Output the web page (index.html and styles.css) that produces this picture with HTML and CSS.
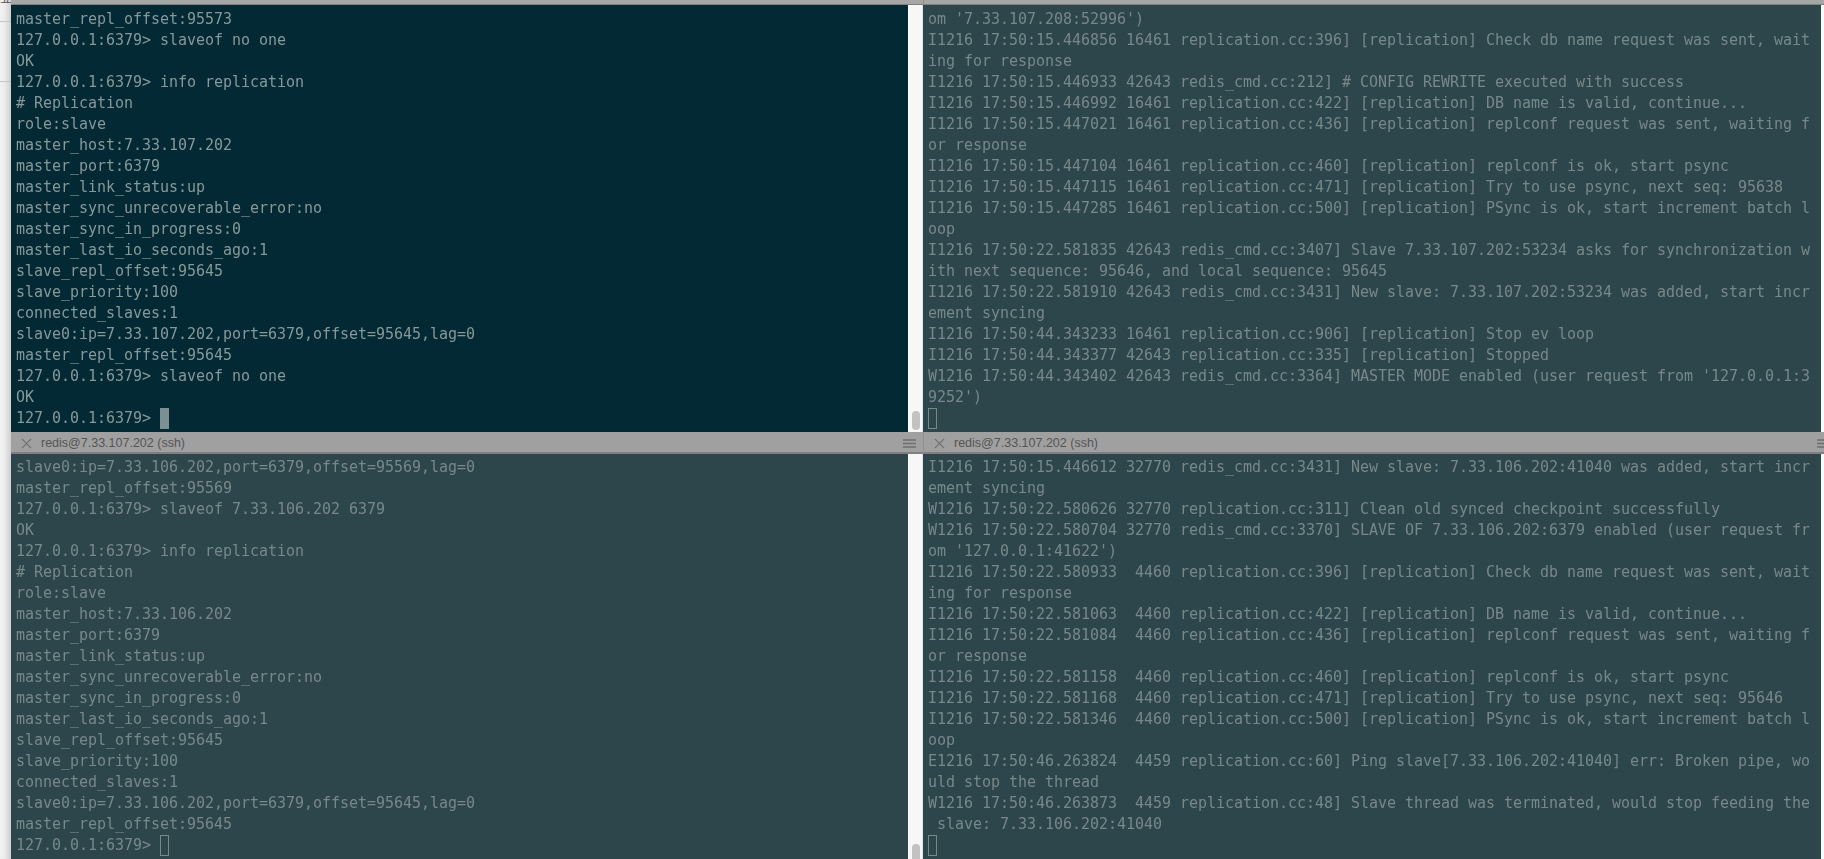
FILE: index.html
```html
<!DOCTYPE html>
<html lang="en">
<head>
<meta charset="utf-8">
<title>redis@7.33.107.202 (ssh)</title>
<link rel="stylesheet" href="styles.css">
</head>
<body>
<div class="window">
  <aside class="gutter">
    <span class="gutter-text">业F</span>
    <div class="gutter-rule gutter-rule-a"></div>
    <div class="gutter-rule gutter-rule-b"></div>
  </aside>
  <section class="col col-left">
    <div class="strip"></div>
    <div class="pane pane-top">
<pre class="term term-active">master_repl_offset:95573
127.0.0.1:6379&gt; slaveof no one
OK
127.0.0.1:6379&gt; info replication
# Replication
role:slave
master_host:7.33.107.202
master_port:6379
master_link_status:up
master_sync_unrecoverable_error:no
master_sync_in_progress:0
master_last_io_seconds_ago:1
slave_repl_offset:95645
slave_priority:100
connected_slaves:1
slave0:ip=7.33.107.202,port=6379,offset=95645,lag=0
master_repl_offset:95645
127.0.0.1:6379&gt; slaveof no one
OK
127.0.0.1:6379&gt; <span class="cursor cursor-solid"></span></pre>
      <div class="scroll"><div class="thumb thumb-top"></div></div>
    </div>
    <header class="titlebar">
      <svg class="close" viewBox="0 0 12 12"><path d="M1 1 L11 11 M11 1 L1 11"/></svg>
      <span class="title">redis@7.33.107.202 (ssh)</span>
      <svg class="menu" viewBox="0 0 13 9"><path d="M0 1 H13 M0 4.5 H13 M0 8 H13"/></svg>
    </header>
    <div class="pane pane-bottom">
<pre class="term">slave0:ip=7.33.106.202,port=6379,offset=95569,lag=0
master_repl_offset:95569
127.0.0.1:6379&gt; slaveof 7.33.106.202 6379
OK
127.0.0.1:6379&gt; info replication
# Replication
role:slave
master_host:7.33.106.202
master_port:6379
master_link_status:up
master_sync_unrecoverable_error:no
master_sync_in_progress:0
master_last_io_seconds_ago:1
slave_repl_offset:95645
slave_priority:100
connected_slaves:1
slave0:ip=7.33.106.202,port=6379,offset=95645,lag=0
master_repl_offset:95645
127.0.0.1:6379&gt; <span class="cursor"></span></pre>
      <div class="scroll"><div class="thumb thumb-bottom"></div></div>
    </div>
  </section>
  <section class="col col-right">
    <div class="strip strip-right"></div>
    <div class="pane pane-top">
<pre class="term">om '7.33.107.208:52996')
I1216 17:50:15.446856 16461 replication.cc:396] [replication] Check db name request was sent, wait
ing for response
I1216 17:50:15.446933 42643 redis_cmd.cc:212] # CONFIG REWRITE executed with success
I1216 17:50:15.446992 16461 replication.cc:422] [replication] DB name is valid, continue...
I1216 17:50:15.447021 16461 replication.cc:436] [replication] replconf request was sent, waiting f
or response
I1216 17:50:15.447104 16461 replication.cc:460] [replication] replconf is ok, start psync
I1216 17:50:15.447115 16461 replication.cc:471] [replication] Try to use psync, next seq: 95638
I1216 17:50:15.447285 16461 replication.cc:500] [replication] PSync is ok, start increment batch l
oop
I1216 17:50:22.581835 42643 redis_cmd.cc:3407] Slave 7.33.107.202:53234 asks for synchronization w
ith next sequence: 95646, and local sequence: 95645
I1216 17:50:22.581910 42643 redis_cmd.cc:3431] New slave: 7.33.107.202:53234 was added, start incr
ement syncing
I1216 17:50:44.343233 16461 replication.cc:906] [replication] Stop ev loop
I1216 17:50:44.343377 42643 replication.cc:335] [replication] Stopped
W1216 17:50:44.343402 42643 redis_cmd.cc:3364] MASTER MODE enabled (user request from '127.0.0.1:3
9252')
<span class="cursor"></span></pre>
      <div class="edge"></div>
    </div>
    <header class="titlebar">
      <svg class="close" viewBox="0 0 12 12"><path d="M1 1 L11 11 M11 1 L1 11"/></svg>
      <span class="title">redis@7.33.107.202 (ssh)</span>
      <svg class="menu menu-cut" viewBox="0 0 13 9"><path d="M0 1 H13 M0 4.5 H13 M0 8 H13"/></svg>
    </header>
    <div class="pane pane-bottom">
<pre class="term">I1216 17:50:15.446612 32770 redis_cmd.cc:3431] New slave: 7.33.106.202:41040 was added, start incr
ement syncing
W1216 17:50:22.580626 32770 replication.cc:311] Clean old synced checkpoint successfully
W1216 17:50:22.580704 32770 redis_cmd.cc:3370] SLAVE OF 7.33.106.202:6379 enabled (user request fr
om '127.0.0.1:41622')
I1216 17:50:22.580933  4460 replication.cc:396] [replication] Check db name request was sent, wait
ing for response
I1216 17:50:22.581063  4460 replication.cc:422] [replication] DB name is valid, continue...
I1216 17:50:22.581084  4460 replication.cc:436] [replication] replconf request was sent, waiting f
or response
I1216 17:50:22.581158  4460 replication.cc:460] [replication] replconf is ok, start psync
I1216 17:50:22.581168  4460 replication.cc:471] [replication] Try to use psync, next seq: 95646
I1216 17:50:22.581346  4460 replication.cc:500] [replication] PSync is ok, start increment batch l
oop
E1216 17:50:46.263824  4459 replication.cc:60] Ping slave[7.33.106.202:41040] err: Broken pipe, wo
uld stop the thread
W1216 17:50:46.263873  4459 replication.cc:48] Slave thread was terminated, would stop feeding the
 slave: 7.33.106.202:41040
<span class="cursor"></span></pre>
      <div class="edge"></div>
    </div>
  </section>
</div>
</body>
</html>
```
FILE: styles.css
```css
* { box-sizing: border-box; }
html, body { margin: 0; height: 100%; overflow: hidden; background: #fff; }

.window { display: flex; width: 1824px; height: 859px; overflow: hidden; }

.gutter {
  width: 11px;
  flex: none;
  display: flex;
  flex-direction: column;
  overflow: hidden;
  background: linear-gradient(to right, #f2f2f2 0, #ececec 40%, #cfcfcf 100%);
}
.gutter-text {
  font: 12px/12px "Liberation Sans", "Noto Sans CJK SC", sans-serif;
  color: #555;
  margin-top: -7px;
  height: 12px;
  white-space: nowrap;
}
.gutter-rule { height: 1px; background: #c4c4c4; flex: none; }
.gutter-rule-a { margin-top: 16px; }
.gutter-rule-b { margin-top: 59px; }

.col { flex: none; display: flex; flex-direction: column; }
.col-left { width: 912px; }
.col-right { width: 901px; }

.strip { height: 5px; flex: none; background: #a6a6a6; border-bottom: 1px solid #808080; }
.strip-right { border-left: 1px solid #8f8f8f; }

.pane { display: flex; flex: none; overflow: hidden; }
.pane-top { height: 427px; }
.pane-bottom { height: 405px; }

.term {
  flex: 1;
  margin: 0;
  padding: 4px 0 0 5px;
  background: #2d464c;
  color: #76888a;
  font: 15px/21px "DejaVu Sans Mono", monospace;
  letter-spacing: -0.03px;
  white-space: pre;
  overflow: hidden;
  filter: blur(0.3px);
}
.term-active { background: #022934; color: #869899; }
.pane-bottom .term { padding-top: 3px; }

.cursor {
  display: inline-block;
  width: 9px;
  height: 21px;
  vertical-align: top;
  border: 1px solid #76888a;
}
.cursor-solid { background: #7c9093; border-color: #7c9093; }

.scroll { width: 15px; flex: none; background: #f7f7f7; border-left: 1px solid #fff; position: relative; border-right: 1px solid #e2e2e2; }
.thumb { position: absolute; left: 3px; width: 8px; background: #c2c2c2; border-radius: 4px; }
.thumb-top { top: 406px; height: 19px; }
.thumb-bottom { top: 390px; height: 20px; }

.edge { width: 3px; flex: none; background: #fafafa; }

.titlebar {
  height: 22px;
  flex: none;
  display: flex;
  align-items: center;
  background: #a0a0a0;
  border-bottom: 2px solid #808080;
  padding: 2px 0 0 10px;
  overflow: hidden;
}
.col-right .titlebar { border-left: 1px solid #909090; }
.close { width: 11px; height: 11px; flex: none; fill: none; stroke: #717171; stroke-width: 1.4; }
.title { font: 12.5px/18px "Liberation Sans", sans-serif; color: #555; margin-left: 9px; flex: 1; white-space: nowrap; }
.menu { width: 13px; height: 9px; flex: none; fill: none; stroke: #6e6e6e; stroke-width: 1.6; margin-right: 7px; }
.menu-cut { margin-right: -6px; }
```
